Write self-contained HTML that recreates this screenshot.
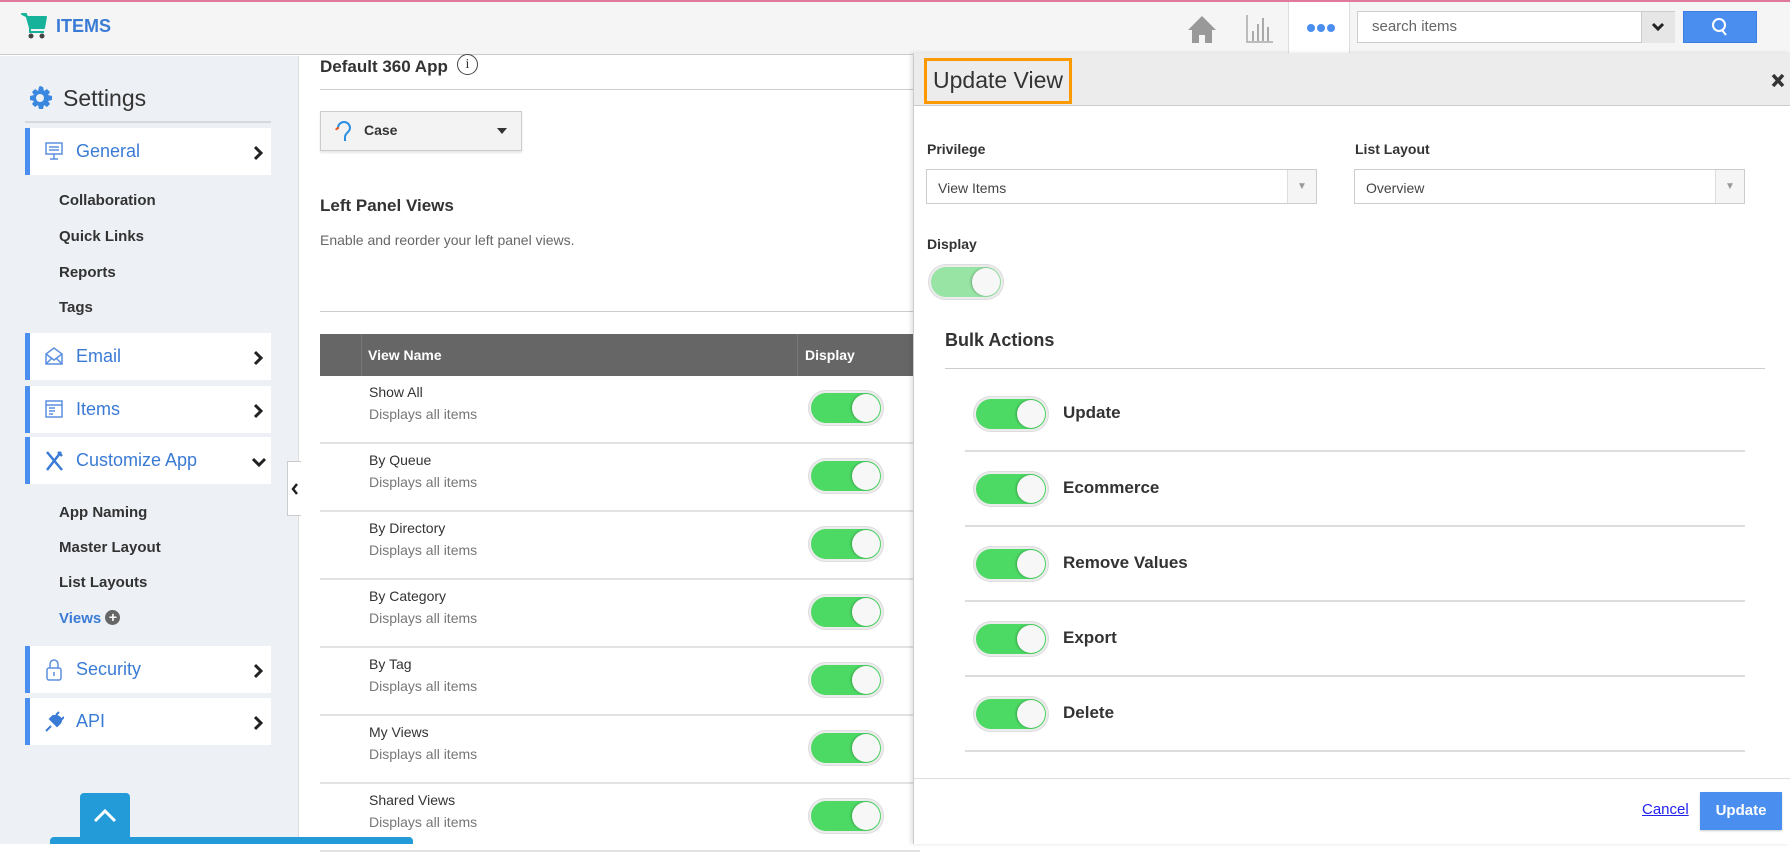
<!DOCTYPE html>
<html><head><meta charset="utf-8"><style>
*{box-sizing:border-box;margin:0;padding:0}
body{width:1790px;height:844px;overflow:hidden;font-family:"Liberation Sans",Arial,sans-serif;background:#fff;position:relative;color:#333}
.a{position:absolute}
.tg{position:absolute;width:76px;height:36px;border-radius:18px;background:#ececec;box-shadow:inset 0 0 0 1px #ddd}
.tg::before{content:"";position:absolute;left:3px;top:3px;right:3px;bottom:3px;border-radius:15px;background:#4cd964}
.tg::after{content:"";position:absolute;right:4px;top:4px;width:28px;height:28px;border-radius:50%;background:#f7f7f7;box-shadow:-1px 0 2px rgba(0,0,0,.25)}
.tg.l::before{background:#97e4a4}
.menu{position:absolute;left:25px;width:246px;height:47px;background:#fff;border-left:5px solid #4a8ef0}
.menu span{position:absolute;left:46px;top:13px;font-size:18px;color:#3a7bd5}
.menu svg{position:absolute;left:14px;top:13px}
.menu svg.ch{left:auto;right:8px;top:17px}
.sub{position:absolute;left:59px;font-size:15px;font-weight:bold;color:#333}
.row{position:absolute;left:320px;width:600px;height:68px;border-bottom:2px solid #e2e2e2}
.row .n{position:absolute;left:49px;top:8px;font-size:14px;color:#333}
.row .d{position:absolute;left:49px;top:30px;font-size:14px;color:#777}
.row .tg{left:488px;top:14px}
.bk{position:absolute;left:965px;width:780px;height:75px;border-bottom:2px solid #ddd}
.bk .tg{left:8px;top:19px}
.bk span{position:absolute;left:98px;top:26px;font-size:17px;font-weight:bold;color:#333}
</style></head><body>
<!-- header -->
<div class="a" style="left:0;top:0;width:1790px;height:55px;background:#f5f5f5;border-top:2px solid #e0799a;border-bottom:1px solid #ccc"></div>
<svg class="a" style="left:21px;top:13px" width="26" height="27" viewBox="0 0 26 27"><path d="M1 1h4l4 14h14l2-11H7z" fill="#16b39a" stroke="#16b39a" stroke-width="2" stroke-linejoin="round"/><path d="M9 15v4h14" stroke="#16b39a" stroke-width="2" fill="none"/><circle cx="10" cy="23" r="2.5" fill="#444"/><circle cx="21" cy="23" r="2.5" fill="#444"/></svg>
<div class="a" style="left:56px;top:16px;font-size:18px;font-weight:bold;color:#3a7bd5">ITEMS</div>
<svg class="a" style="left:1187px;top:15px" width="30" height="28" viewBox="0 0 30 28"><path d="M15 1L1 15h4v13h7v-8h6v8h7V15h4z" fill="#999"/></svg>
<svg class="a" style="left:1246px;top:14px" width="28" height="29" viewBox="0 0 28 29"><path d="M1 1v27h26" stroke="#aaa" fill="none" stroke-width="1.5"/><path d="M7 27V17M12 27V10M17 27V4M22 27V13" stroke="#aaa" stroke-width="2"/></svg>
<div class="a" style="left:1288px;top:2px;width:62px;height:53px;background:#fff;border-left:1px solid #ddd;border-right:1px solid #ddd"></div>
<div class="a" style="left:1307px;top:24px;width:8px;height:8px;border-radius:50%;background:#4a8ef0;box-shadow:10px 0 0 #4a8ef0,20px 0 0 #4a8ef0"></div>
<div class="a" style="left:1357px;top:11px;width:318px;height:32px;background:#fff;border:1px solid #ccc"></div>
<div class="a" style="left:1372px;top:18px;font-size:15px;color:#666">search items</div>
<div class="a" style="left:1641px;top:12px;width:34px;height:31px;background:#e6e6e6;border-left:1px solid #ccc"></div>
<svg class="a" style="left:1651px;top:22px" width="14" height="10" viewBox="0 0 14 10"><path d="M2 2l5 5 5-5" stroke="#222" stroke-width="3" fill="none"/></svg>
<div class="a" style="left:1683px;top:11px;width:74px;height:32px;background:#4a8ef0;border:1px solid #3b7de0"></div>
<svg class="a" style="left:1711px;top:17px" width="18" height="20" viewBox="0 0 18 20"><circle cx="8" cy="8" r="6" stroke="#fff" stroke-width="2" fill="none"/><path d="M11 13l4 5" stroke="#fff" stroke-width="2"/></svg>

<!-- sidebar -->
<div class="a" style="left:0;top:56px;width:299px;height:788px;background:#edf0f5;border-right:1px solid #ddd"></div>
<svg class="a" style="left:26px;top:84px" width="28" height="28" viewBox="0 0 28 28"><path d="M14 2l3 1 1 4 3-2 3 3-2 3 4 1v4l-4 1 2 3-3 3-3-2-1 4h-4l-1-4-3 2-3-3 2-3-4-1v-4l4-1-2-3 3-3 3 2 1-4z" fill="#3a87e0"/><circle cx="14" cy="14" r="4" fill="#edf0f5"/></svg>
<div class="a" style="left:63px;top:85px;font-size:23px;color:#333">Settings</div>
<div class="a" style="left:25px;top:121px;width:246px;height:2px;background:#d5d8dd"></div>
<div class="menu" style="top:128px"><svg width="20" height="20" viewBox="0 0 20 20"><rect x="2" y="2" width="16" height="11" fill="none" stroke="#5b8fe0" stroke-width="1.5"/><path d="M5 6h10M5 9h10M10 13v5M6 18h8" stroke="#5b8fe0" stroke-width="1.5"/></svg><span>General</span><svg class="ch" width="10" height="16" viewBox="0 0 10 16"><path d="M2 2l6 6-6 6" stroke="#222" stroke-width="3" fill="none"/></svg></div>
<div class="sub" style="top:192px">Collaboration</div>
<div class="sub" style="top:228px">Quick Links</div>
<div class="sub" style="top:264px">Reports</div>
<div class="sub" style="top:299px">Tags</div>
<div class="menu" style="top:333px"><svg width="20" height="20" viewBox="0 0 20 20"><path d="M2 8l8-6 8 6v10H2z M2 8l8 6 8-6 M2 18l6-6M18 18l-6-6" fill="none" stroke="#5b8fe0" stroke-width="1.5"/></svg><span>Email</span><svg class="ch" width="10" height="16" viewBox="0 0 10 16"><path d="M2 2l6 6-6 6" stroke="#222" stroke-width="3" fill="none"/></svg></div>
<div class="menu" style="top:386px"><svg width="20" height="20" viewBox="0 0 20 20"><rect x="2" y="2" width="16" height="16" fill="none" stroke="#5b8fe0" stroke-width="1.5"/><path d="M2 6h16M5 9h6M5 12h6M5 15h4" stroke="#5b8fe0" stroke-width="1.5"/></svg><span>Items</span><svg class="ch" width="10" height="16" viewBox="0 0 10 16"><path d="M2 2l6 6-6 6" stroke="#222" stroke-width="3" fill="none"/></svg></div>
<div class="menu" style="top:437px"><svg width="20" height="22" viewBox="0 0 20 22"><path d="M3 2l15 18M17 2L3 20M14 2l4 4" stroke="#3a7bd5" stroke-width="2.5"/></svg><span>Customize App</span><svg class="ch" style="right:4px;top:20px" width="16" height="10" viewBox="0 0 16 10"><path d="M2 2l6 6 6-6" stroke="#222" stroke-width="3" fill="none"/></svg></div>
<div class="sub" style="top:504px">App Naming</div>
<div class="sub" style="top:539px">Master Layout</div>
<div class="sub" style="top:574px">List Layouts</div>
<div class="sub" style="top:610px;color:#3a7bd5">Views <span style="display:inline-block;width:15px;height:15px;border-radius:50%;background:#666;color:#fff;text-align:center;line-height:15px;font-size:14px;vertical-align:1px">+</span></div>
<div class="menu" style="top:646px"><svg width="20" height="22" viewBox="0 0 20 22"><rect x="3" y="9" width="14" height="12" rx="2" fill="none" stroke="#5b8fe0" stroke-width="1.5"/><path d="M6 9V5a4 4 0 018 0v4M10 13v4" fill="none" stroke="#5b8fe0" stroke-width="1.5"/></svg><span>Security</span><svg class="ch" width="10" height="16" viewBox="0 0 10 16"><path d="M2 2l6 6-6 6" stroke="#222" stroke-width="3" fill="none"/></svg></div>
<div class="menu" style="top:698px"><svg width="20" height="22" viewBox="0 0 20 22"><path d="M2 20l5-5M6 8l7 7 3-3c2-2 1-5-1-6l-2-1-4 0z M12 4l3-3M17 9l3-3" stroke="#3a7bd5" stroke-width="2" fill="#3a7bd5"/></svg><span>API</span><svg class="ch" width="10" height="16" viewBox="0 0 10 16"><path d="M2 2l6 6-6 6" stroke="#222" stroke-width="3" fill="none"/></svg></div>
<div class="a" style="left:80px;top:793px;width:50px;height:51px;background:#229bd8;border-radius:4px 4px 0 0"></div>
<svg class="a" style="left:92px;top:808px" width="26" height="16" viewBox="0 0 26 16"><path d="M3 13L13 3l10 10" stroke="#fff" stroke-width="3" fill="none"/></svg>
<div class="a" style="left:50px;top:837px;width:363px;height:7px;background:#229bd8;border-radius:4px 4px 0 0"></div>
<div class="a" style="left:287px;top:461px;width:14px;height:55px;background:#fff;border:1px solid #ccc;border-right:none"></div>
<svg class="a" style="left:291px;top:482px" width="8" height="14" viewBox="0 0 8 14"><path d="M6 2L2 7l4 5" stroke="#222" stroke-width="2.5" fill="none"/></svg>

<!-- main -->
<div class="a" style="left:320px;top:57px;font-size:17px;font-weight:bold;color:#333">Default 360 App</div>
<div class="a" style="left:457px;top:54px;width:21px;height:21px;border:1.5px solid #444;border-radius:50%;text-align:center;font-size:14px;line-height:19px;font-family:'Liberation Serif',serif">i</div>
<div class="a" style="left:320px;top:89px;width:600px;height:1px;background:#ccc"></div>
<div class="a" style="left:320px;top:111px;width:202px;height:40px;background:#f3f3f3;border:1px solid #ccc;box-shadow:0 2px 2px rgba(0,0,0,.1)"></div>
<svg class="a" style="left:334px;top:120px" width="20" height="24" viewBox="0 0 20 24"><path d="M4 8a6 6 0 0112 0c0 4-5 5-5 9v4" stroke="#2a8fe0" stroke-width="2" fill="none"/><path d="M2 10a3 3 0 013-2" stroke="#f05a28" stroke-width="2" fill="none"/></svg>
<div class="a" style="left:364px;top:122px;font-size:14px;font-weight:bold">Case</div>
<div class="a" style="left:497px;top:128px;border:5px solid transparent;border-top:6px solid #333"></div>
<div class="a" style="left:320px;top:196px;font-size:17px;font-weight:bold">Left Panel Views</div>
<div class="a" style="left:320px;top:232px;font-size:14px;color:#666">Enable and reorder your left panel views.</div>
<div class="a" style="left:320px;top:311px;width:600px;height:1px;background:#ccc"></div>
<div class="a" style="left:320px;top:334px;width:600px;height:42px;background:#666"></div>
<div class="a" style="left:361px;top:334px;width:1px;height:42px;background:#777"></div>
<div class="a" style="left:797px;top:334px;width:1px;height:42px;background:#777"></div>
<div class="a" style="left:368px;top:347px;font-size:14px;font-weight:bold;color:#fff">View Name</div>
<div class="a" style="left:805px;top:347px;font-size:14px;font-weight:bold;color:#fff">Display</div>
<div class="row" style="top:376px"><div class="n">Show All</div><div class="d">Displays all items</div><div class="tg"></div></div>
<div class="row" style="top:444px"><div class="n">By Queue</div><div class="d">Displays all items</div><div class="tg"></div></div>
<div class="row" style="top:512px"><div class="n">By Directory</div><div class="d">Displays all items</div><div class="tg"></div></div>
<div class="row" style="top:580px"><div class="n">By Category</div><div class="d">Displays all items</div><div class="tg"></div></div>
<div class="row" style="top:648px"><div class="n">By Tag</div><div class="d">Displays all items</div><div class="tg"></div></div>
<div class="row" style="top:716px"><div class="n">My Views</div><div class="d">Displays all items</div><div class="tg"></div></div>
<div class="row" style="top:784px"><div class="n">Shared Views</div><div class="d">Displays all items</div><div class="tg"></div></div>

<!-- panel -->
<div class="a" style="left:913px;top:53px;width:877px;height:791px;background:#fff;border-left:1px solid #ccc;box-shadow:-2px 0 4px rgba(0,0,0,.12)"></div>
<div class="a" style="left:914px;top:53px;width:876px;height:53px;background:#ececec;border-bottom:1px solid #ccc"></div>
<div class="a" style="left:924px;top:58px;width:148px;height:46px;border:3px solid #ff9900"></div>
<div class="a" style="left:933px;top:67px;font-size:23px;color:#333">Update View</div>
<svg class="a" style="left:1771px;top:73px" width="14" height="15" viewBox="0 0 14 15"><path d="M2 2l10 11M12 2L2 13" stroke="#333" stroke-width="3.5"/></svg>
<div class="a" style="left:927px;top:141px;font-size:14px;font-weight:bold">Privilege</div>
<div class="a" style="left:1355px;top:141px;font-size:14px;font-weight:bold">List Layout</div>
<div class="a" style="left:926px;top:169px;width:391px;height:35px;border:1px solid #ccc;background:#fff"></div>
<div class="a" style="left:1287px;top:170px;width:29px;height:33px;border-left:1px solid #ddd;background:#f5f5f5;color:#999;font-size:10px;text-align:center;line-height:33px">▼</div>
<div class="a" style="left:938px;top:180px;font-size:14px;color:#444">View Items</div>
<div class="a" style="left:1354px;top:169px;width:391px;height:35px;border:1px solid #ccc;background:#fff"></div>
<div class="a" style="left:1715px;top:170px;width:29px;height:33px;border-left:1px solid #ddd;background:#f5f5f5;color:#999;font-size:10px;text-align:center;line-height:33px">▼</div>
<div class="a" style="left:1366px;top:180px;font-size:14px;color:#444">Overview</div>
<div class="a" style="left:927px;top:236px;font-size:14px;font-weight:bold">Display</div>
<div class="tg l" style="left:928px;top:264px"></div>
<div class="a" style="left:945px;top:330px;font-size:18px;font-weight:bold">Bulk Actions</div>
<div class="a" style="left:945px;top:368px;width:820px;height:1px;background:#ccc"></div>
<div class="bk" style="top:377px"><div class="tg"></div><span>Update</span></div>
<div class="bk" style="top:452px"><div class="tg"></div><span>Ecommerce</span></div>
<div class="bk" style="top:527px"><div class="tg"></div><span>Remove Values</span></div>
<div class="bk" style="top:602px"><div class="tg"></div><span>Export</span></div>
<div class="bk" style="top:677px"><div class="tg"></div><span>Delete</span></div>
<div class="a" style="left:914px;top:778px;width:876px;height:1px;background:#ddd"></div>
<div class="a" style="left:1642px;top:801px;font-size:15px;color:#2222ee;text-decoration:underline">Cancel</div>
<div class="a" style="left:1700px;top:792px;width:82px;height:38px;background:#4a8ef0;color:#fff;font-size:15px;font-weight:bold;text-align:center;line-height:38px;box-shadow:0 1px 2px rgba(0,0,0,.2)">Update</div>
</body></html>
